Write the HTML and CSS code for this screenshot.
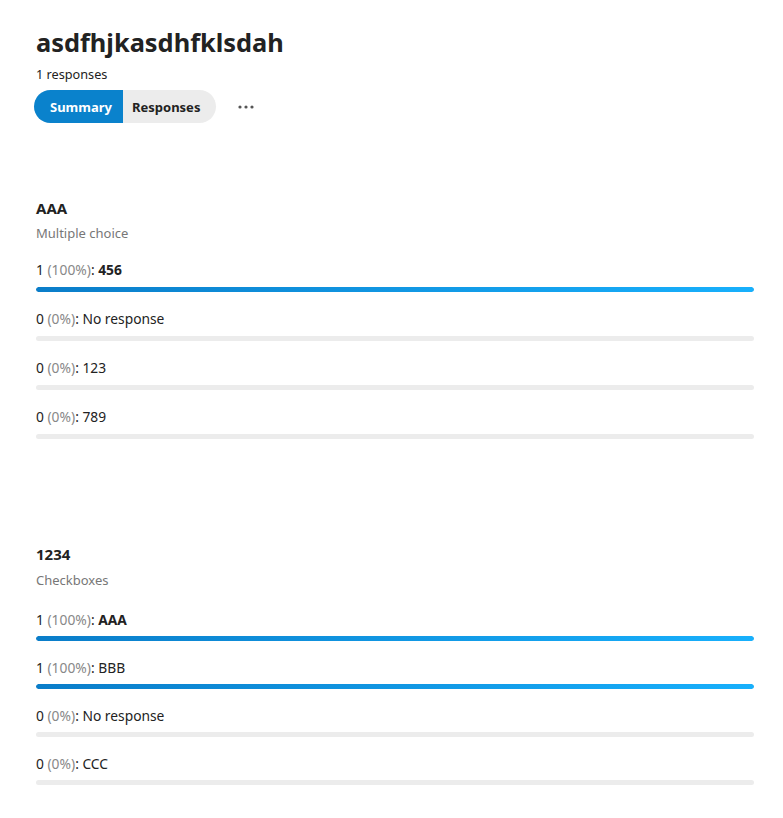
FILE: index.html
```html
<!DOCTYPE html>
<html>
<head>
<meta charset="utf-8">
<link rel="stylesheet" href="styles.css">
</head>
<body>
<div class="page">
  <h1 class="title">asdfhjkasdhfklsdah</h1>
  <div class="count">1 responses</div>
  <div class="toolbar">
    <div class="tabs">
      <span class="tab active">Summary</span>
      <span class="tab">Responses</span>
    </div>
    <svg class="more" width="16" height="4" viewBox="0 0 16 4"><circle cx="2" cy="2" r="1.6"/><circle cx="8" cy="2" r="1.6"/><circle cx="14" cy="2" r="1.6"/></svg>
  </div>

  <section class="question q1">
    <h2 class="q-title">AAA</h2>
    <div class="q-type">Multiple choice</div>
    <div class="row">
      <div class="label">1 <span class="pct">(100%)</span>: <b>456</b></div>
      <div class="track"><div class="fill" style="width:100%"></div></div>
    </div>
    <div class="row">
      <div class="label">0 <span class="pct">(0%)</span>: No response</div>
      <div class="track"><div class="fill" style="width:0%"></div></div>
    </div>
    <div class="row">
      <div class="label">0 <span class="pct">(0%)</span>: 123</div>
      <div class="track"><div class="fill" style="width:0%"></div></div>
    </div>
    <div class="row">
      <div class="label">0 <span class="pct">(0%)</span>: 789</div>
      <div class="track"><div class="fill" style="width:0%"></div></div>
    </div>
  </section>

  <section class="question q2">
    <h2 class="q-title">1234</h2>
    <div class="q-type">Checkboxes</div>
    <div class="row">
      <div class="label">1 <span class="pct">(100%)</span>: <b>AAA</b></div>
      <div class="track"><div class="fill" style="width:100%"></div></div>
    </div>
    <div class="row">
      <div class="label">1 <span class="pct">(100%)</span>: BBB</div>
      <div class="track"><div class="fill" style="width:100%"></div></div>
    </div>
    <div class="row">
      <div class="label">0 <span class="pct">(0%)</span>: No response</div>
      <div class="track"><div class="fill" style="width:0%"></div></div>
    </div>
    <div class="row">
      <div class="label">0 <span class="pct">(0%)</span>: CCC</div>
      <div class="track"><div class="fill" style="width:0%"></div></div>
    </div>
  </section>
</div>
</body>
</html>
```

FILE: styles.css
```css
html, body {
  margin: 0;
  padding: 0;
  background: #ffffff;
}
body {
  font-family: "Noto Sans", "Open Sans", sans-serif;
  color: #222222;
}
.page {
  padding: 26px 29px 0 36px;
}
.title {
  margin: 0;
  font-size: 25.4px;
  line-height: 32px;
  font-weight: 700;
  color: #222222;
}
.count {
  margin-top: 8px;
  font-size: 12.7px;
  line-height: 16px;
}
.toolbar {
  display: flex;
  align-items: center;
  margin-top: 8px;
  margin-left: -2px;
}
.tabs {
  display: flex;
  height: 33px;
  border-radius: 17px;
  overflow: hidden;
  background: #ececec;
}
.tab {
  display: flex;
  align-items: center;
  padding: 0 16px 0 9px;
  font-size: 13px;
  font-weight: 700;
  color: #222222;
}
.tab.active {
  background: #0a82cc;
  color: #ffffff;
  padding: 0 11px 0 16px;
}
.more {
  margin-left: 22px;
  fill: #555555;
}
.question.q1 {
  margin-top: 75px;
}
.question.q2 {
  margin-top: 105px;
}
.q-title {
  margin: 0;
  font-size: 15px;
  line-height: 20px;
  font-weight: 700;
}
.q-type {
  margin-top: 6px;
  font-size: 13px;
  line-height: 18px;
  color: #777777;
}
.q2 .q-type {
  margin-top: 7px;
}
.row {
  margin-top: 18px;
}
.q1 .q-type + .row {
  margin-top: 19px;
}
.q2 .q-type + .row {
  margin-top: 22px;
}
.label {
  font-size: 13.8px;
  line-height: 18px;
}
.q2 .track {
  margin-top: 7px;
}
.pct {
  color: #888888;
}
.label b {
  font-weight: 700;
}
.track {
  margin-top: 8px;
  height: 5px;
  border-radius: 3px;
  background: #ececec;
  overflow: hidden;
}
.fill {
  height: 100%;
  border-radius: 3px;
  background: linear-gradient(to right, #0a7dc9, #18b0fc);
}
```
